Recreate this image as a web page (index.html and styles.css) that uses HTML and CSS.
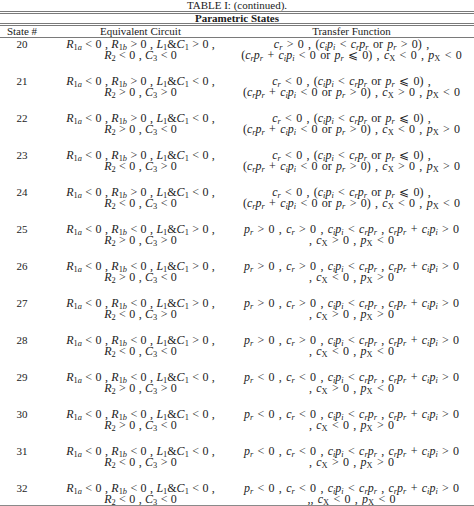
FILE: index.html
```html
<!DOCTYPE html>
<html>
<head>
<meta charset="utf-8">
<link rel="stylesheet" href="styles.css">
</head>
<body>
<div class="page">
  <div class="caption">TABLE I: (continued).</div>
  <div class="group">Parametric States</div>
  <div class="row head">
    <div class="c1">State #</div>
    <div class="c2">Equivalent Circuit</div>
    <div class="c3">Transfer Function</div>
  </div>

  <div class="row">
    <div class="c1">20</div>
    <div class="c2"><span><i>R</i><sub>1<i>a</i></sub> &lt; 0 , <i>R</i><sub>1<i>b</i></sub> &gt; 0 , <i>L</i><sub>1</sub>&amp;<i>C</i><sub>1</sub> &gt; 0 ,</span><span><i>R</i><sub>2</sub> &lt; 0 , <i>C</i><sub>3</sub> &lt; 0</span></div>
    <div class="c3"><span><i>c</i><sub><i>r</i></sub> &gt; 0 , (<i>c</i><sub><i>i</i></sub><i>p</i><sub><i>i</i></sub> &lt; <i>c</i><sub><i>r</i></sub><i>p</i><sub><i>r</i></sub> or <i>p</i><sub><i>r</i></sub> &gt; 0) ,</span><span>(<i>c</i><sub><i>r</i></sub><i>p</i><sub><i>r</i></sub> + <i>c</i><sub><i>i</i></sub><i>p</i><sub><i>i</i></sub> &lt; 0 or <i>p</i><sub><i>r</i></sub> ⩽ 0) , <i>c</i><sub>X</sub> &lt; 0 , <i>p</i><sub>X</sub> &lt; 0</span></div>
  </div>

  <div class="row">
    <div class="c1">21</div>
    <div class="c2"><span><i>R</i><sub>1<i>a</i></sub> &lt; 0 , <i>R</i><sub>1<i>b</i></sub> &gt; 0 , <i>L</i><sub>1</sub>&amp;<i>C</i><sub>1</sub> &lt; 0 ,</span><span><i>R</i><sub>2</sub> &gt; 0 , <i>C</i><sub>3</sub> &gt; 0</span></div>
    <div class="c3"><span><i>c</i><sub><i>r</i></sub> &lt; 0 , (<i>c</i><sub><i>i</i></sub><i>p</i><sub><i>i</i></sub> &lt; <i>c</i><sub><i>r</i></sub><i>p</i><sub><i>r</i></sub> or <i>p</i><sub><i>r</i></sub> ⩽ 0) ,</span><span>(<i>c</i><sub><i>r</i></sub><i>p</i><sub><i>r</i></sub> + <i>c</i><sub><i>i</i></sub><i>p</i><sub><i>i</i></sub> &lt; 0 or <i>p</i><sub><i>r</i></sub> &gt; 0) , <i>c</i><sub>X</sub> &gt; 0 , <i>p</i><sub>X</sub> &lt; 0</span></div>
  </div>

  <div class="row">
    <div class="c1">22</div>
    <div class="c2"><span><i>R</i><sub>1<i>a</i></sub> &lt; 0 , <i>R</i><sub>1<i>b</i></sub> &gt; 0 , <i>L</i><sub>1</sub>&amp;<i>C</i><sub>1</sub> &lt; 0 ,</span><span><i>R</i><sub>2</sub> &gt; 0 , <i>C</i><sub>3</sub> &lt; 0</span></div>
    <div class="c3"><span><i>c</i><sub><i>r</i></sub> &lt; 0 , (<i>c</i><sub><i>i</i></sub><i>p</i><sub><i>i</i></sub> &lt; <i>c</i><sub><i>r</i></sub><i>p</i><sub><i>r</i></sub> or <i>p</i><sub><i>r</i></sub> ⩽ 0) ,</span><span>(<i>c</i><sub><i>r</i></sub><i>p</i><sub><i>r</i></sub> + <i>c</i><sub><i>i</i></sub><i>p</i><sub><i>i</i></sub> &lt; 0 or <i>p</i><sub><i>r</i></sub> &gt; 0) , <i>c</i><sub>X</sub> &lt; 0 , <i>p</i><sub>X</sub> &gt; 0</span></div>
  </div>

  <div class="row">
    <div class="c1">23</div>
    <div class="c2"><span><i>R</i><sub>1<i>a</i></sub> &lt; 0 , <i>R</i><sub>1<i>b</i></sub> &gt; 0 , <i>L</i><sub>1</sub>&amp;<i>C</i><sub>1</sub> &lt; 0 ,</span><span><i>R</i><sub>2</sub> &lt; 0 , <i>C</i><sub>3</sub> &gt; 0</span></div>
    <div class="c3"><span><i>c</i><sub><i>r</i></sub> &lt; 0 , (<i>c</i><sub><i>i</i></sub><i>p</i><sub><i>i</i></sub> &lt; <i>c</i><sub><i>r</i></sub><i>p</i><sub><i>r</i></sub> or <i>p</i><sub><i>r</i></sub> ⩽ 0) ,</span><span>(<i>c</i><sub><i>r</i></sub><i>p</i><sub><i>r</i></sub> + <i>c</i><sub><i>i</i></sub><i>p</i><sub><i>i</i></sub> &lt; 0 or <i>p</i><sub><i>r</i></sub> &gt; 0) , <i>c</i><sub>X</sub> &gt; 0 , <i>p</i><sub>X</sub> &gt; 0</span></div>
  </div>

  <div class="row">
    <div class="c1">24</div>
    <div class="c2"><span><i>R</i><sub>1<i>a</i></sub> &lt; 0 , <i>R</i><sub>1<i>b</i></sub> &gt; 0 , <i>L</i><sub>1</sub>&amp;<i>C</i><sub>1</sub> &lt; 0 ,</span><span><i>R</i><sub>2</sub> &lt; 0 , <i>C</i><sub>3</sub> &lt; 0</span></div>
    <div class="c3"><span><i>c</i><sub><i>r</i></sub> &lt; 0 , (<i>c</i><sub><i>i</i></sub><i>p</i><sub><i>i</i></sub> &lt; <i>c</i><sub><i>r</i></sub><i>p</i><sub><i>r</i></sub> or <i>p</i><sub><i>r</i></sub> ⩽ 0) ,</span><span>(<i>c</i><sub><i>r</i></sub><i>p</i><sub><i>r</i></sub> + <i>c</i><sub><i>i</i></sub><i>p</i><sub><i>i</i></sub> &lt; 0 or <i>p</i><sub><i>r</i></sub> &gt; 0) , <i>c</i><sub>X</sub> &lt; 0 , <i>p</i><sub>X</sub> &lt; 0</span></div>
  </div>

  <div class="row">
    <div class="c1">25</div>
    <div class="c2"><span><i>R</i><sub>1<i>a</i></sub> &lt; 0 , <i>R</i><sub>1<i>b</i></sub> &lt; 0 , <i>L</i><sub>1</sub>&amp;<i>C</i><sub>1</sub> &gt; 0 ,</span><span><i>R</i><sub>2</sub> &gt; 0 , <i>C</i><sub>3</sub> &gt; 0</span></div>
    <div class="c3"><span><i>p</i><sub><i>r</i></sub> &gt; 0 , <i>c</i><sub><i>r</i></sub> &gt; 0 , <i>c</i><sub><i>i</i></sub><i>p</i><sub><i>i</i></sub> &lt; <i>c</i><sub><i>r</i></sub><i>p</i><sub><i>r</i></sub> , <i>c</i><sub><i>r</i></sub><i>p</i><sub><i>r</i></sub> + <i>c</i><sub><i>i</i></sub><i>p</i><sub><i>i</i></sub> &gt; 0</span><span>, <i>c</i><sub>X</sub> &gt; 0 , <i>p</i><sub>X</sub> &lt; 0</span></div>
  </div>

  <div class="row">
    <div class="c1">26</div>
    <div class="c2"><span><i>R</i><sub>1<i>a</i></sub> &lt; 0 , <i>R</i><sub>1<i>b</i></sub> &lt; 0 , <i>L</i><sub>1</sub>&amp;<i>C</i><sub>1</sub> &gt; 0 ,</span><span><i>R</i><sub>2</sub> &gt; 0 , <i>C</i><sub>3</sub> &lt; 0</span></div>
    <div class="c3"><span><i>p</i><sub><i>r</i></sub> &gt; 0 , <i>c</i><sub><i>r</i></sub> &gt; 0 , <i>c</i><sub><i>i</i></sub><i>p</i><sub><i>i</i></sub> &lt; <i>c</i><sub><i>r</i></sub><i>p</i><sub><i>r</i></sub> , <i>c</i><sub><i>r</i></sub><i>p</i><sub><i>r</i></sub> + <i>c</i><sub><i>i</i></sub><i>p</i><sub><i>i</i></sub> &gt; 0</span><span>, <i>c</i><sub>X</sub> &lt; 0 , <i>p</i><sub>X</sub> &gt; 0</span></div>
  </div>

  <div class="row">
    <div class="c1">27</div>
    <div class="c2"><span><i>R</i><sub>1<i>a</i></sub> &lt; 0 , <i>R</i><sub>1<i>b</i></sub> &lt; 0 , <i>L</i><sub>1</sub>&amp;<i>C</i><sub>1</sub> &gt; 0 ,</span><span><i>R</i><sub>2</sub> &lt; 0 , <i>C</i><sub>3</sub> &gt; 0</span></div>
    <div class="c3"><span><i>p</i><sub><i>r</i></sub> &gt; 0 , <i>c</i><sub><i>r</i></sub> &gt; 0 , <i>c</i><sub><i>i</i></sub><i>p</i><sub><i>i</i></sub> &lt; <i>c</i><sub><i>r</i></sub><i>p</i><sub><i>r</i></sub> , <i>c</i><sub><i>r</i></sub><i>p</i><sub><i>r</i></sub> + <i>c</i><sub><i>i</i></sub><i>p</i><sub><i>i</i></sub> &gt; 0</span><span>, <i>c</i><sub>X</sub> &gt; 0 , <i>p</i><sub>X</sub> &gt; 0</span></div>
  </div>

  <div class="row">
    <div class="c1">28</div>
    <div class="c2"><span><i>R</i><sub>1<i>a</i></sub> &lt; 0 , <i>R</i><sub>1<i>b</i></sub> &lt; 0 , <i>L</i><sub>1</sub>&amp;<i>C</i><sub>1</sub> &gt; 0 ,</span><span><i>R</i><sub>2</sub> &lt; 0 , <i>C</i><sub>3</sub> &lt; 0</span></div>
    <div class="c3"><span><i>p</i><sub><i>r</i></sub> &gt; 0 , <i>c</i><sub><i>r</i></sub> &gt; 0 , <i>c</i><sub><i>i</i></sub><i>p</i><sub><i>i</i></sub> &lt; <i>c</i><sub><i>r</i></sub><i>p</i><sub><i>r</i></sub> , <i>c</i><sub><i>r</i></sub><i>p</i><sub><i>r</i></sub> + <i>c</i><sub><i>i</i></sub><i>p</i><sub><i>i</i></sub> &gt; 0</span><span>, <i>c</i><sub>X</sub> &lt; 0 , <i>p</i><sub>X</sub> &lt; 0</span></div>
  </div>

  <div class="row">
    <div class="c1">29</div>
    <div class="c2"><span><i>R</i><sub>1<i>a</i></sub> &lt; 0 , <i>R</i><sub>1<i>b</i></sub> &lt; 0 , <i>L</i><sub>1</sub>&amp;<i>C</i><sub>1</sub> &lt; 0 ,</span><span><i>R</i><sub>2</sub> &gt; 0 , <i>C</i><sub>3</sub> &gt; 0</span></div>
    <div class="c3"><span><i>p</i><sub><i>r</i></sub> &lt; 0 , <i>c</i><sub><i>r</i></sub> &lt; 0 , <i>c</i><sub><i>i</i></sub><i>p</i><sub><i>i</i></sub> &lt; <i>c</i><sub><i>r</i></sub><i>p</i><sub><i>r</i></sub> , <i>c</i><sub><i>r</i></sub><i>p</i><sub><i>r</i></sub> + <i>c</i><sub><i>i</i></sub><i>p</i><sub><i>i</i></sub> &gt; 0</span><span>, <i>c</i><sub>X</sub> &gt; 0 , <i>p</i><sub>X</sub> &lt; 0</span></div>
  </div>

  <div class="row">
    <div class="c1">30</div>
    <div class="c2"><span><i>R</i><sub>1<i>a</i></sub> &lt; 0 , <i>R</i><sub>1<i>b</i></sub> &lt; 0 , <i>L</i><sub>1</sub>&amp;<i>C</i><sub>1</sub> &lt; 0 ,</span><span><i>R</i><sub>2</sub> &gt; 0 , <i>C</i><sub>3</sub> &lt; 0</span></div>
    <div class="c3"><span><i>p</i><sub><i>r</i></sub> &lt; 0 , <i>c</i><sub><i>r</i></sub> &lt; 0 , <i>c</i><sub><i>i</i></sub><i>p</i><sub><i>i</i></sub> &lt; <i>c</i><sub><i>r</i></sub><i>p</i><sub><i>r</i></sub> , <i>c</i><sub><i>r</i></sub><i>p</i><sub><i>r</i></sub> + <i>c</i><sub><i>i</i></sub><i>p</i><sub><i>i</i></sub> &gt; 0</span><span>, <i>c</i><sub>X</sub> &lt; 0 , <i>p</i><sub>X</sub> &gt; 0</span></div>
  </div>

  <div class="row">
    <div class="c1">31</div>
    <div class="c2"><span><i>R</i><sub>1<i>a</i></sub> &lt; 0 , <i>R</i><sub>1<i>b</i></sub> &lt; 0 , <i>L</i><sub>1</sub>&amp;<i>C</i><sub>1</sub> &lt; 0 ,</span><span><i>R</i><sub>2</sub> &lt; 0 , <i>C</i><sub>3</sub> &gt; 0</span></div>
    <div class="c3"><span><i>p</i><sub><i>r</i></sub> &lt; 0 , <i>c</i><sub><i>r</i></sub> &lt; 0 , <i>c</i><sub><i>i</i></sub><i>p</i><sub><i>i</i></sub> &lt; <i>c</i><sub><i>r</i></sub><i>p</i><sub><i>r</i></sub> , <i>c</i><sub><i>r</i></sub><i>p</i><sub><i>r</i></sub> + <i>c</i><sub><i>i</i></sub><i>p</i><sub><i>i</i></sub> &gt; 0</span><span>, <i>c</i><sub>X</sub> &gt; 0 , <i>p</i><sub>X</sub> &gt; 0</span></div>
  </div>

  <div class="row last">
    <div class="c1">32</div>
    <div class="c2"><span><i>R</i><sub>1<i>a</i></sub> &lt; 0 , <i>R</i><sub>1<i>b</i></sub> &lt; 0 , <i>L</i><sub>1</sub>&amp;<i>C</i><sub>1</sub> &lt; 0 ,</span><span><i>R</i><sub>2</sub> &lt; 0 , <i>C</i><sub>3</sub> &lt; 0</span></div>
    <div class="c3"><span><i>p</i><sub><i>r</i></sub> &lt; 0 , <i>c</i><sub><i>r</i></sub> &lt; 0 , <i>c</i><sub><i>i</i></sub><i>p</i><sub><i>i</i></sub> &lt; <i>c</i><sub><i>r</i></sub><i>p</i><sub><i>r</i></sub> , <i>c</i><sub><i>r</i></sub><i>p</i><sub><i>r</i></sub> + <i>c</i><sub><i>i</i></sub><i>p</i><sub><i>i</i></sub> &gt; 0</span><span>,, <i>c</i><sub>X</sub> &lt; 0 , <i>p</i><sub>X</sub> &lt; 0</span></div>
  </div>
  <div class="bottom"></div>
</div>
</body>
</html>
```

FILE: styles.css
```css
html, body {
  margin: 0;
  padding: 0;
  background: #ffffff;
}
body {
  font-family: "Liberation Serif", "DejaVu Serif", serif;
  font-size: 11px;
  color: #1c1c1c;
}
.page {
  width: 474px;
  height: 506px;
  overflow: hidden;
  display: flex;
  flex-direction: column;
}
.caption {
  height: 11px;
  line-height: 11px;
  text-align: center;
}
.group {
  border-top: 3px double #7a7a7a;
  border-bottom: 3px double #7a7a7a;
  height: 9px;
  line-height: 9px;
  text-align: center;
  font-weight: bold;
}
.row {
  display: grid;
  grid-template-columns: 44px 193px 229px;
  padding: 1px 0 14px 0;
  line-height: 11px;
}
.row.head {
  padding: 0;
  height: 11px;
  border-bottom: 1px solid #7a7a7a;
}
.row.last {
  padding-bottom: 0;
}
.c1, .c2, .c3 {
  display: flex;
  flex-direction: column;
  align-items: center;
  white-space: nowrap;
}
.row:not(.head) .c2 {
  font-size: 12px;
  word-spacing: 0.4px;
}
.row:not(.head) .c3 {
  font-size: 12px;
  word-spacing: 1.3px;
}
i {
  font-style: italic;
}
sub {
  font-size: 70%;
  vertical-align: -0.25em;
  line-height: 0;
  word-spacing: 0;
}
.bottom {
  border-top: 4px solid #8a8a8a;
}
```
